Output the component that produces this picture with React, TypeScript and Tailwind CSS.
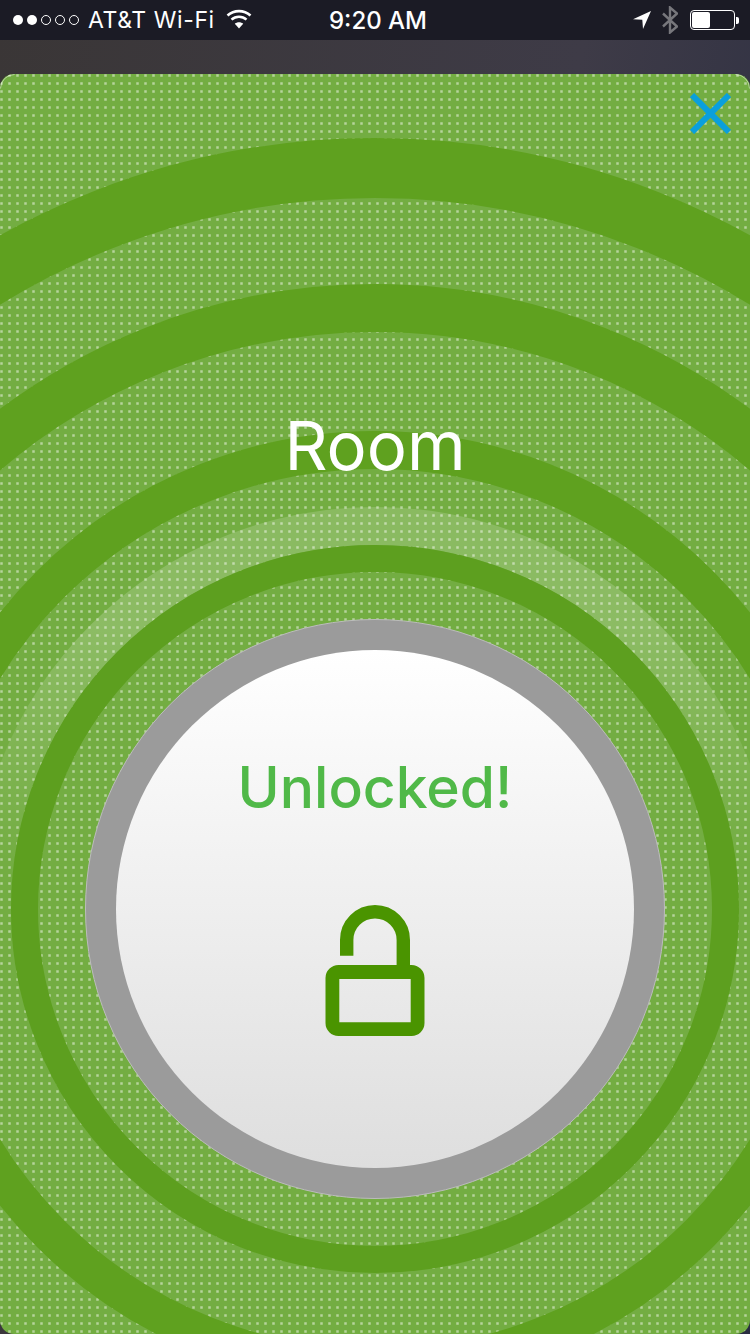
const SF = "font-['Inter','Liberation_Sans',sans-serif]";

const SignalDots = () => (
  <svg width="68" height="12" viewBox="0 0 68 12">
    <circle cx="5" cy="6" r="5" fill="#fff" />
    <circle cx="19" cy="6" r="5" fill="#fff" />
    <circle cx="33" cy="6" r="4.5" fill="none" stroke="#fff" />
    <circle cx="47" cy="6" r="4.5" fill="none" stroke="#fff" />
    <circle cx="61" cy="6" r="4.5" fill="none" stroke="#fff" />
  </svg>
);

const WifiIcon = () => (
  <svg width="26" height="20" viewBox="0 0 26 20" fill="none" stroke="#fff" strokeWidth="2.6">
    <path d="M1.5 6.5C8 .7 18 .7 24.5 6.5" />
    <path d="M5.5 10.6C9.8 6.8 16.2 6.8 20.5 10.6" />
    <path d="M13 19.5L8.8 14.8C11.2 12.8 14.8 12.8 17.2 14.8Z" fill="#fff" stroke="none" />
  </svg>
);

const LocationIcon = () => (
  <svg width="18" height="18" viewBox="0 0 18 18">
    <path d="M18 0L10 18L9.3 8.7L0 8.3Z" fill="#fff" />
  </svg>
);

const BluetoothIcon = () => (
  <svg width="16" height="28" viewBox="0 0 16 28" fill="none" stroke="#77777c" strokeWidth="2.4">
    <path d="M1 7.5L15 20.5L8 26.5V1.5L15 7.5L1 20.5" />
  </svg>
);

const BatteryIcon = () => (
  <div className="flex items-center">
    <div className="w-[45px] h-[20px] rounded-[4px] border border-white p-[1px]">
      <div className="w-[18px] h-full bg-white rounded-[2px]" />
    </div>
    <div className="w-[3px] h-[7px] bg-white rounded-r-[2px] ml-[1px]" />
  </div>
);

const StatusBar = () => (
  <div className={`h-10 bg-[#1b1b25] flex items-center text-white ${SF}`}>
    <div className="w-[300px] flex items-center pl-[13px]">
      <SignalDots />
      <span className="ml-[7px] text-[23px] tracking-[0.6px]">AT&amp;T Wi-Fi</span>
      <span className="ml-[11px] mb-[2px] flex"><WifiIcon /></span>
    </div>
    <div className="w-[156px] pt-[2px] text-center text-[24px] font-medium">9:20 AM</div>
    <div className="flex-1 flex items-center justify-end pr-[11px]">
      <LocationIcon />
      <span className="ml-[11px] mr-[12px] flex"><BluetoothIcon /></span>
      <BatteryIcon />
    </div>
  </div>
);

// rings + dot texture behind the card content
const Backdrop = () => (
  <svg className="absolute inset-0" width="750" height="1260" viewBox="0 0 750 1260">
    <defs>
      <pattern id="dots" width="8" height="8" patternUnits="userSpaceOnUse">
        <rect x="0.25" y="0.25" width="2.5" height="2.5" fill="#b6d49c" />
      </pattern>
      <linearGradient id="fade" x1="0" y1="430" x2="0" y2="790" gradientUnits="userSpaceOnUse">
        <stop offset="0" stopColor="#fff" stopOpacity="0.16" />
        <stop offset="0.35" stopColor="#fff" stopOpacity="0.18" />
        <stop offset="1" stopColor="#fff" stopOpacity="0" />
      </linearGradient>
    </defs>
    <rect width="750" height="1260" fill="#73ad42" />
    <rect width="750" height="1260" fill="url(#dots)" />
    <g fill="none" stroke="#5fa11f">
      <circle cx="375" cy="835" r="741" strokeWidth="60" />
      <circle cx="375" cy="835" r="601" strokeWidth="48" />
      <circle cx="375" cy="835" r="459" strokeWidth="38" />
    </g>
    <circle cx="375" cy="835" r="383" fill="none" stroke="url(#fade)" strokeWidth="38" />
    <circle cx="375" cy="835" r="350.5" fill="none" stroke="#5d9f1f" strokeWidth="27" />
    <path d="M0.5 14.5A14 14 0 0 1 14.5 0.5M735.5 0.5A14 14 0 0 1 749.5 14.5" fill="none" stroke="#fff" strokeOpacity="0.5" />
  </svg>
);

const OpenLock = () => (
  <svg width="100" height="132" viewBox="325 905 100 132">
    <path d="M346.7 955.7V940a28.3 28.3 0 0 1 56.6 0V972" fill="none" stroke="#4a9400" strokeWidth="13.4" />
    <path
      fillRule="evenodd"
      fill="#4a9400"
      d="M338.5 965H411.5a13 13 0 0 1 13 13V1023a13 13 0 0 1-13 13H338.5a13 13 0 0 1-13-13V978a13 13 0 0 1 13-13ZM339.3 979V1022.300H410.700V979Z"
    />
  </svg>
);

export default function App() {
  return (
    <div className={`relative w-[750px] h-[1334px] overflow-hidden bg-[linear-gradient(100deg,#3a3636_0%,#3e3b47_60%,#2a2d42_100%)] ${SF}`}>
      <StatusBar />
      <div className="relative mt-[34px] h-[1260px] rounded-[14px] overflow-hidden flex flex-col items-center">
        <Backdrop />
        <button className="absolute top-[19px] left-[690px] flex">
          <svg width="41" height="41" viewBox="0 0 41 41" stroke="#0a9fdc" strokeWidth="6">
            <path d="M2 2L39 39M39 2L2 39" />
          </svg>
        </button>
        <h1 className="relative mt-[328px] text-[67px] leading-[88px] font-normal text-white">Room</h1>
        <div className="relative mt-[129px] w-[580px] h-[580px] rounded-full bg-[#9b9b9b] border border-[#bcbcbc] flex items-center justify-center">
          <div className="w-[518px] h-[518px] rounded-full bg-[linear-gradient(180deg,#ffffff_0%,#dedede_100%)] flex flex-col items-center">
            <span className="mt-[102px] text-[57px] leading-[72px] font-[450] text-[#50b948]">Unlocked!</span>
            <span className="mt-[81px] flex"><OpenLock /></span>
          </div>
        </div>
      </div>
    </div>
  );
}
